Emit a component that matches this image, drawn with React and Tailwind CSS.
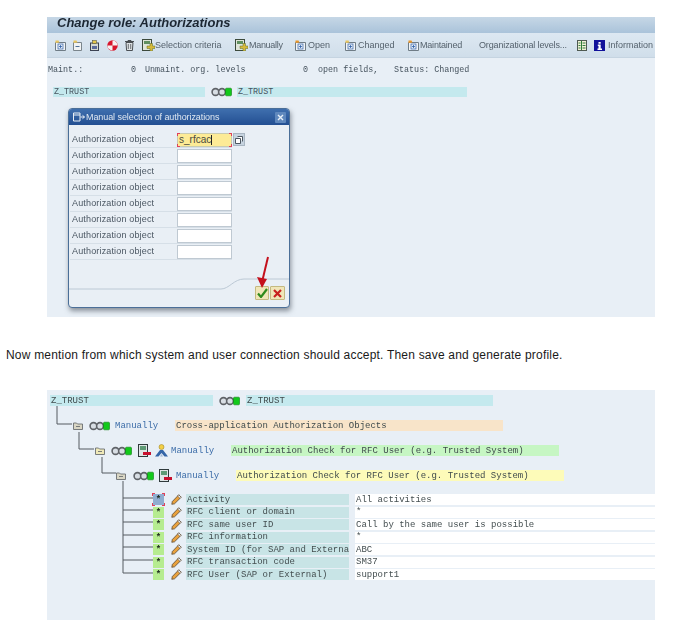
const mono = "font-['Liberation_Mono',monospace]";
const sans = "font-['Liberation_Sans',Arial,sans-serif]";

function Lights({ className = "" }) {
  return (
    <svg width="21" height="10" viewBox="0 0 21 10" className={"shrink-0 " + className}>
      <circle cx="4.5" cy="5" r="3.4" fill="#d8dee4" stroke="#5f6368" strokeWidth="1.6" />
      <circle cx="11" cy="5" r="3.4" fill="#d8dee4" stroke="#5f6368" strokeWidth="1.6" />
      <rect x="14.5" y="1.2" width="6" height="7.6" rx="1" fill="#12c91a" stroke="#0b7d12" strokeWidth=".6" />
    </svg>
  );
}

function Folder({ className = "", color = "#d9d6c4" }) {
  return (
    <svg width="10" height="8" viewBox="0 0 10 8" className={"shrink-0 " + className}>
      <path d="M.5 7.5V1h3l1 1h5v5.5z" fill={color} stroke="#6b6f72" strokeWidth=".9" />
      <path d="M3 4.5h4" stroke="#6b6f72" strokeWidth=".9" />
    </svg>
  );
}

function DocRed({ className = "" }) {
  return (
    <svg width="13" height="13" viewBox="0 0 13 13" className={"shrink-0 " + className}>
      <rect x=".5" y=".5" width="9" height="12" fill="#dfe5e6" stroke="#2f3a3c" />
      <rect x="2" y="2" width="6" height="4" fill="#5d9a75" />
      <rect x="5" y="8" width="8" height="3" fill="#c8102e" />
    </svg>
  );
}

function Person({ className = "" }) {
  return (
    <svg width="13" height="13" viewBox="0 0 13 13" className={"shrink-0 " + className}>
      <circle cx="6.5" cy="3" r="2.5" fill="#f3cf45" stroke="#a58b2a" strokeWidth=".6" />
      <path d="M0 12.5 5 6h3l5 6.500H9.500L6.500 9 3.500 12.500z" fill="#3566a8" />
      <path d="M5 12.500 6.500 10 8 12.500z" fill="#9fb8d8" />
    </svg>
  );
}

function Pencil({ className = "" }) {
  return (
    <svg width="11" height="11" viewBox="0 0 11 11" className={"shrink-0 " + className}>
      <path d="M7.800.8 10.200 3.200 3.500 9.800.8 10.300l.5-2.800z" fill="#e9a13c" stroke="#5a4a35" strokeWidth=".8" />
      <path d="M7.800.8 10.200 3.200 9 4.400 6.600 2z" fill="#eef0f2" stroke="#5a4a35" strokeWidth=".6" />
    </svg>
  );
}

function Corners() {
  const c = "absolute w-[3px] h-[3px] border-[#e0405a]";
  return (
    <>
      <span className={c + " left-[-1px] top-[-1px] border-l border-t"} />
      <span className={c + " right-[-1px] top-[-1px] border-r border-t"} />
      <span className={c + " left-[-1px] bottom-[-1px] border-l border-b"} />
      <span className={c + " right-[-1px] bottom-[-1px] border-r border-b"} />
    </>
  );
}

function TbExpand({ flag = false, className = "" }) {
  return (
    <svg width="11" height="11" viewBox="0 0 11 11" className={"shrink-0 " + className}>
      <path d="M.5 2.500h10v8H.5z" fill="#f3f5f6" stroke="#6f7c86" />
      <rect x="3" y="4" width="5" height="5" fill="#e8eef5" stroke="#2f5fa8" strokeWidth=".7" />
      <path d="M5.500 5v3M4 6.500h3" stroke="#2f5fa8" strokeWidth=".8" />
      <path d="M.5 3V.5h3l1 2z" fill={flag ? "#e8962a" : "#e8c560"} />
    </svg>
  );
}

function TbGreen({ className = "" }) {
  return (
    <svg width="13" height="12" viewBox="0 0 13 12" className={"shrink-0 " + className}>
      <rect x=".5" y=".5" width="9" height="11" fill="#dfe4d8" stroke="#3c4a3c" />
      <rect x="2" y="2" width="6" height="3" fill="#5f8f5f" />
      <path d="M5 7h3V4.500h2.500V7H13v2.500h-2.500V12H8V9.500H5z" fill="#d8b93a" stroke="#5b6e24" strokeWidth=".5" />
    </svg>
  );
}

function Toolbar() {
  const label = "shrink-0 text-[9px] leading-none text-[#55626d] whitespace-nowrap " + sans;
  return (
    <div className="h-[25px] flex items-center pl-[8px] bg-gradient-to-b from-[#dde8f2] to-[#d0deea] border-b border-[#c5d4e1]">
      <TbExpand />
      <svg width="9" height="11" viewBox="0 0 9 11" className="shrink-0 ml-[7px]">
        <path d="M.5 2.500h8v8h-8z" fill="#f1f3f4" stroke="#7a858c" />
        <path d="M2.500 6.500h4" stroke="#4d6f96" />
        <path d="M.5 3V.5h3l1 2z" fill="#e8c560" />
      </svg>
      <svg width="9" height="11" viewBox="0 0 9 11" className="shrink-0 ml-[8px]">
        <rect x=".5" y="3" width="8" height="7.500" fill="#d5d9cf" stroke="#3c4352" />
        <rect x="2" y="6" width="5" height="3" fill="#5a6a9a" />
        <rect x="2.500" y=".5" width="4" height="3" fill="#e5c74a" stroke="#4a4a30" strokeWidth=".5" />
      </svg>
      <svg width="11" height="11" viewBox="0 0 11 11" className="shrink-0 ml-[8px]">
        <circle cx="5.500" cy="5.500" r="5.200" fill="#d8152c" />
        <path d="M5.500 5.500V.4A5.100 5.100 0 0 1 10.600 5.500zM5.500 5.500V10.600A5.100 5.100 0 0 1 .4 5.500z" fill="#f5f2f2" />
      </svg>
      <svg width="9" height="11" viewBox="0 0 9 11" className="shrink-0 ml-[7px]">
        <path d="M1 2.500h7l-.6 8H1.600zM0 1.500h9M3 1.500V.5h3v1" fill="#dfe3e6" stroke="#3b3f44" strokeWidth=".9" />
        <path d="M3.300 4v5M5.700 4v5" stroke="#3b3f44" strokeWidth=".7" />
      </svg>
      <TbGreen className="ml-[8px]" />
      <span className={label + " w-[66px]"}>Selection criteria</span>
      <TbGreen className="ml-[14px]" />
      <span className={label + " ml-[1px] w-[32px] tracking-[-0.3px]"}>Manually</span>
      <TbExpand flag className="ml-[14px]" />
      <span className={label + " ml-[2px] w-[21px]"}>Open</span>
      <TbExpand className="ml-[16px]" />
      <span className={label + " ml-[2px] w-[34px]"}>Changed</span>
      <TbExpand flag className="ml-[16px]" />
      <span className={label + " ml-[1px] w-[42px] tracking-[-0.2px]"}>Maintained</span>
      <span className={label + " ml-[17px] w-[88px] tracking-[-0.13px]"}>Organizational levels...</span>
      <svg width="10" height="11" viewBox="0 0 10 11" className="shrink-0 ml-[10px]">
        <rect x=".5" y=".5" width="9" height="10" fill="#f2f0d8" stroke="#4f5a52" />
        <path d="M4.500 1v9M5.500 3h3M5.500 5.500h3M5.500 8h3M1.500 3h2M1.500 5.500h2M1.500 8h2" stroke="#2f7d3a" />
      </svg>
      <svg width="11" height="11" viewBox="0 0 11 11" className="shrink-0 ml-[7px]">
        <rect width="11" height="11" fill="#11119a" />
        <path d="M4.500 2h2.200v1.700H4.500zM3.800 4.600h2.900v4H8V10H3.500V8.600h1V6H3.800z" fill="#fff" />
      </svg>
      <span className={label + " ml-[3px]"}>Information</span>
    </div>
  );
}

function AuthRow({ first }) {
  return (
    <div className="flex items-center h-[16px] pl-[2px] w-[162px] border-b border-[#d6dfe7]">
      <span className={"w-[105px] shrink-0 text-[#4a5662] text-[9px] leading-none tracking-[0.16px] whitespace-nowrap " + sans}>Authorization object</span>
      {first ? (
        <div className="relative shrink-0 w-[55px] h-[14px] bg-[#fdeb96] border border-[#c8cbb0] flex items-center pl-[1px]">
          <Corners />
          <span className={"text-[#4a4a40] text-[10px] leading-none " + sans}>s_rfcac</span>
          <span className="w-px h-[10px] bg-[#222]" />
        </div>
      ) : (
        <div className="shrink-0 w-[55px] h-[14px] bg-white border border-[#bfc9d2]" />
      )}
      {first && (
        <div className="shrink-0 ml-[1px] w-[12px] h-[13px] bg-[#c6d3df] border border-[#a9b6c2] flex items-center justify-center">
          <svg width="8" height="8" viewBox="0 0 8 8">
            <path d="M2.500 .5h5v5M.5 2.500h5v5h-5z" fill="#fff" stroke="#3b4650" strokeWidth=".9" />
          </svg>
        </div>
      )}
    </div>
  );
}

function Dialog() {
  return (
    <div className="absolute left-[21px] top-[91px] w-[222px] h-[200px] rounded-[4px] bg-[#e9eff5] border border-[#4b6f98] shadow-[1px_3px_5px_rgba(60,70,80,0.55)] flex flex-col">
      <div className="h-[16px] shrink-0 rounded-t-[3px] bg-gradient-to-b from-[#3f6fae] to-[#234f92] flex items-center pl-[4px] pr-[3px]">
        <svg width="12" height="10" viewBox="0 0 12 10" className="shrink-0">
          <path d="M.5 1h6.500v8H.5zM.5 3h6.500" fill="none" stroke="#e8eef5" />
          <path d="M7.500 5h4M9.500 3.300 11.500 5 9.500 6.700" fill="none" stroke="#e8eef5" />
        </svg>
        <span className={"ml-[1px] text-[#dfe8f2] text-[9px] leading-none whitespace-nowrap tracking-[-0.08px] " + sans}>Manual selection of authorizations</span>
        <div className="ml-auto w-[11px] h-[11px] bg-[#5f88bd] rounded-[1px] flex items-center justify-center">
          <svg width="7" height="7" viewBox="0 0 7 7"><path d="M1 1l5 5M6 1 1 6" stroke="#e8f0f8" strokeWidth="1.400" /></svg>
        </div>
      </div>
      <div className="pt-[7px] pl-[1px] flex flex-col">
        <AuthRow first />
        {[1, 2, 3, 4, 5, 6, 7].map((i) => <AuthRow key={i} />)}
      </div>
      <svg width="220" height="16" viewBox="0 0 220 16" className="mt-[14px] shrink-0">
        <path d="M0 15H152C160 15 165 5 175 5H220" fill="none" stroke="#bcc9d5" />
      </svg>
      <div className="relative flex justify-end gap-[1px] pr-[4px] mt-[-4px]">
        <div className="w-[14px] h-[14px] bg-[#f0e6b8] border border-[#c4b980] rounded-[1px] flex items-center justify-center">
          <svg width="11" height="10" viewBox="0 0 11 10"><path d="M1 5.500 4 9l6-8" fill="none" stroke="#2f8a1c" strokeWidth="2.200" /></svg>
        </div>
        <div className="w-[15px] h-[14px] bg-[#f0e6b8] border border-[#c4b980] rounded-[1px] flex items-center justify-center">
          <svg width="9" height="9" viewBox="0 0 9 9"><path d="M1 1l7 7M8 1 1 8" stroke="#c8201e" strokeWidth="2.200" /></svg>
        </div>
      </div>
      <svg width="16" height="34" viewBox="0 0 16 34" className="absolute left-[186px] top-[147px]">
        <path d="M13 1 7.500 24" stroke="#c4101c" strokeWidth="2" />
        <path d="M2 21 7 32 12 23z" fill="#c4101c" />
      </svg>
    </div>
  );
}

function Bar({ w, className, children }) {
  return (
    <div className={`h-[11px] flex items-center pl-[1px] pt-[2px] text-[9px] leading-none text-[#3f4a4c] whitespace-pre shrink-0 ${mono} ${className} ${w}`}>
      {children}
    </div>
  );
}

function TreeRow({ className, children }) {
  return <div className={"h-[11px] mt-[14px] flex items-center " + className}>{children}</div>;
}

const rows = [
  ["Activity", "All activities"],
  ["RFC client or domain", "*"],
  ["RFC same user ID", "Call by the same user is possible"],
  ["RFC information", "*"],
  ["System ID (for SAP and Externa", "ABC"],
  ["RFC transaction code", "SM37"],
  ["RFC User (SAP or External)", "support1"],
];

export default function App() {
  return (
    <div className="w-[690px] h-[638px] bg-white overflow-hidden pt-[17px]">
      <div className="relative ml-[47px] w-[608px] h-[300px] bg-[#e8eff6] blur-[0.3px]">
        <div className={"h-[16px] pb-[6px] bg-gradient-to-b from-[#c6d7e6] to-[#aac3da] pl-[10px] flex items-center text-[13px] font-bold italic text-[#1c2733] leading-none whitespace-nowrap " + sans}>
          Change role: Authorizations
        </div>
        <Toolbar />
        <div className={"h-[12px] mt-[6px] flex items-center text-[8.400px] leading-none text-[#46535e] whitespace-pre pl-[1px] " + mono}>
          <span className="w-[83px]">Maint.:</span>
          <span className="w-[14px]">0</span>
          <span className="w-[158px]">Unmaint. org. levels</span>
          <span className="w-[15px]">0</span>
          <span className="w-[76px]">open fields,</span>
          <span>Status: Changed</span>
        </div>
        <div className={"flex items-center mt-[11px] ml-[6px] text-[8.400px] " + mono}>
          <div className="w-[152px] h-[10px] bg-[#c4e9ee] flex items-center text-[#46535e] leading-none pl-[1px] pt-[1px]">Z_TRUST</div>
          <Lights className="ml-[6px]" />
          <div className="ml-[5px] w-[230px] h-[10px] bg-[#c4e9ee] flex items-center text-[#46535e] leading-none pl-[1px] pt-[1px]">Z_TRUST</div>
        </div>
        <Dialog />
      </div>

      <p className={"ml-[6px] mt-[31px] h-[14px] text-[12px] leading-[14px] tracking-[0.2px] text-[#1a1a1a] whitespace-nowrap " + sans}>
        Now mention from which system and user connection should accept. Then save and generate profile.
      </p>

      <div className="relative mt-[28px] ml-[47px] w-[608px] h-[230px] bg-[#e8eff6] pt-[5px] blur-[0.3px]">
        <svg width="130" height="190" viewBox="0 0 130 190" className="absolute left-0 top-0" fill="none" stroke="#555b60">
          <path d="M10 16V34H25M32 42V59H47M55 67V83H69M76 91V183H106M76 108H106M76 120H106M76 132H106M76 145H106M76 157H106M76 170H106" />
        </svg>
        <div className="flex items-center">
          <Bar w="w-[163px] ml-[3px]" className="bg-[#c4e9ee]">Z_TRUST</Bar>
          <Lights className="ml-[6px]" />
          <Bar w="w-[247px] ml-[6px]" className="bg-[#c4e9ee]">Z_TRUST</Bar>
        </div>
        <TreeRow className="pl-[26px]">
          <Folder />
          <Lights className="ml-[6px]" />
          <span className={"ml-[5px] pt-[2px] w-[60px] text-[9px] leading-none text-[#3b6ca8] " + mono}>Manually</span>
          <Bar w="w-[328px]" className="bg-[#f8e4c9]">Cross-application Authorization Objects</Bar>
        </TreeRow>
        <TreeRow className="pl-[48px]">
          <Folder color="#efe9b8" />
          <Lights className="ml-[6px]" />
          <DocRed className="ml-[6px]" />
          <Person className="ml-[4px]" />
          <span className={"ml-[3px] pt-[2px] w-[60px] text-[9px] leading-none text-[#3b6ca8] " + mono}>Manually</span>
          <Bar w="w-[328px]" className="bg-[#c6f6c3]">Authorization Check for RFC User (e.g. Trusted System)</Bar>
        </TreeRow>
        <TreeRow className="pl-[69px]">
          <Folder />
          <Lights className="ml-[7px]" />
          <DocRed className="ml-[5px]" />
          <span className={"ml-[4px] pt-[2px] w-[60px] text-[9px] leading-none text-[#3b6ca8] " + mono}>Manually</span>
          <Bar w="w-[328px]" className="bg-[#fdfbb9]">Authorization Check for RFC User (e.g. Trusted System)</Bar>
        </TreeRow>
        <div className="relative mt-[13px] ml-[106px] flex flex-col gap-y-[1.500px]">
          {rows.map(([label, value], i) => (
            <div key={label} className={"h-[11px] flex items-center text-[9px] leading-none text-[#444e50] whitespace-pre " + mono}>
              <div className={"relative w-[11px] h-[11px] shrink-0 flex items-center justify-center " + (i === 0 ? "bg-[#8fadd0]" : "bg-[#b6ec90]")}>
                <span className="text-[#1d2a1d] font-bold pt-[2px]">*</span>
                {i === 0 && <Corners />}
              </div>
              <Pencil className="ml-[7px]" />
              <div className="ml-[4px] w-[163px] h-[11px] bg-[#c8e4e6] flex items-center pl-[1px] pt-[1px] shrink-0">{label}</div>
              <div className="ml-[6px] flex-1 h-[11px] bg-white flex items-center pl-[1px] pt-[1px]">{value}</div>
            </div>
          ))}
        </div>
      </div>
    </div>
  );
}
